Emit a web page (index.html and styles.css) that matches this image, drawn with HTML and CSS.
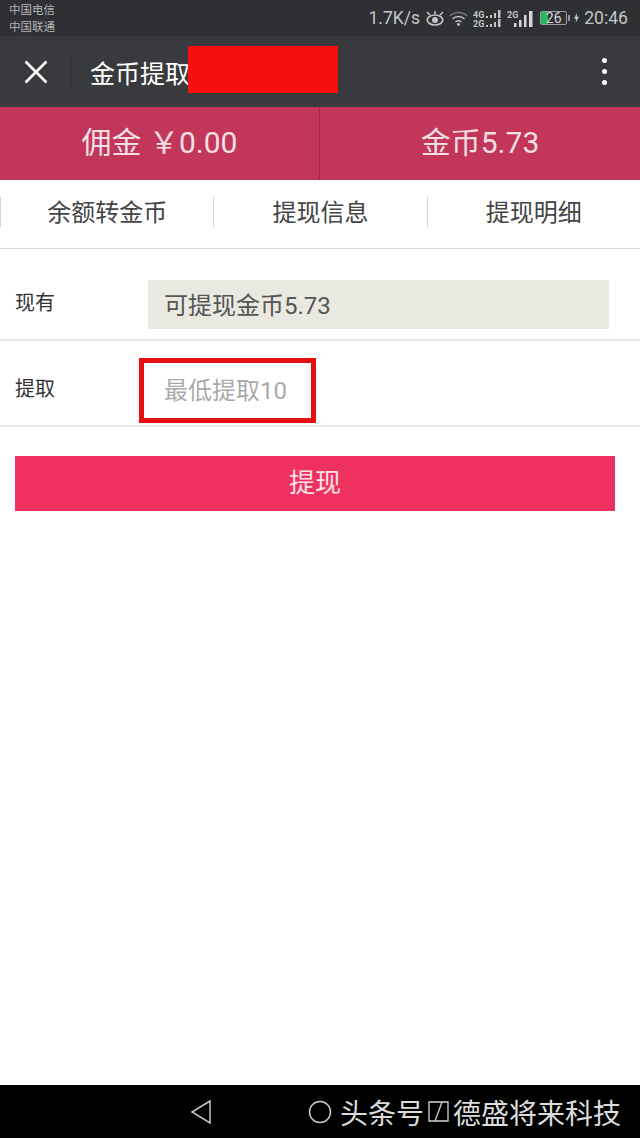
FILE: index.html
```html
<!DOCTYPE html>
<html lang="zh-CN">
  <head>
    <meta charset="UTF-8" />
    <meta name="viewport" content="width=device-width, initial-scale=1.0" />
    <title>金币提取</title>
    <link rel="stylesheet" href="styles.css">
  </head>
  <body>
    <div class="status-bar">
      <div class="carriers">
        <div>中国电信</div>
        <div>中国联通</div>
      </div>
      <div class="status-right">
        <span class="speed">1.7K/s</span>
        <svg class="icon-eye" width="18" height="15" viewBox="0 0 18 15">
          <path d="M1 1l3 3M17 1l-3 3M9 0v3" stroke="#c4c5c6" stroke-width="1.5" fill="none"/>
          <ellipse cx="9" cy="9" rx="7.800" ry="5" stroke="#c4c5c6" stroke-width="1.700" fill="none"/>
          <circle cx="9" cy="9" r="3" fill="#c4c5c6"/>
        </svg>
        <svg class="icon-wifi" width="19" height="16" viewBox="0 0 19 16">
          <path d="M1 6a12 12 0 0 1 17 0" stroke="#77787a" stroke-width="1.400" fill="none"/>
          <path d="M3.500 9a8.500 8.500 0 0 1 12 0M6.500 12a4.500 4.500 0 0 1 6 0" stroke="#c4c5c6" stroke-width="1.500" fill="none"/>
          <circle cx="9.500" cy="14.500" r="1.400" fill="#c4c5c6"/>
        </svg>
        <svg class="icon-signal-double" width="28" height="17" viewBox="0 0 28 17">
          <text x="0" y="7.500" class="net-label">4G</text>
          <text x="0" y="16.500" class="net-label">2G</text>
          <path d="M13 6h2v2h-2zM17 5h2v3h-2zM21 3h2v5h-2zM25 0h2.500v8h-2.500zM13 15h2v2h-2zM17 14h2v3h-2zM21 12h2v5h-2zM25 9h2.500v8h-2.500z" fill="#c4c5c6"/>
        </svg>
        <svg class="icon-signal" width="26" height="17" viewBox="0 0 26 17">
          <text x="0" y="7.500" class="net-label">2G</text>
          <path d="M7 13h2.500v4h-2.500zM12 10h2.500v7h-2.500zM17 5h2.500v12h-2.500zM22 1h3.500v16h-3.500z" fill="#d5d6d7"/>
        </svg>
        <div class="battery">
          <div class="battery-fill"></div>
          <span class="battery-num">26</span>
        </div>
        <div class="battery-cap"></div>
        <svg class="icon-bolt" width="5" height="12" viewBox="0 0 6 12">
          <path d="M3.500 0L0 7h2.500L2 12l4-7.500H3.500z" fill="#c4c5c6"/>
        </svg>
        <span class="clock">20:46</span>
      </div>
    </div>

    <div class="nav-bar">
      <svg class="icon-close" width="24" height="24" viewBox="0 0 24 24">
        <path d="M1.500 1.500L22.500 22.500M22.500 1.500L1.500 22.500" stroke="#fff" stroke-width="2.600" fill="none"/>
      </svg>
      <div class="nav-divider"></div>
      <div class="nav-title">金币提取</div>
      <div class="redaction"></div>
      <div class="more-dots">
        <span></span>
        <span></span>
        <span></span>
      </div>
    </div>

    <div class="balance-bar">
      <div class="balance-item">佣金 ￥0.00</div>
      <div class="balance-item">金币5.73</div>
    </div>

    <div class="tabs">
      <div class="tab">余额转金币</div>
      <div class="tab">提现信息</div>
      <div class="tab">提现明细</div>
    </div>

    <div class="form-row row-current">
      <div class="row-label">现有</div>
      <div class="current-value">可提现金币5.73</div>
    </div>

    <div class="form-row row-amount">
      <div class="row-label">提取</div>
      <div class="amount-input">最低提取10</div>
    </div>

    <div class="submit">提现</div>

    <div class="spacer"></div>

    <div class="bottom-bar">
      <svg class="icon-back" width="22" height="26" viewBox="0 0 22 26">
        <path d="M20 2L2 13L20 24Z" stroke="#c9c9c9" stroke-width="1.500" fill="none"/>
      </svg>
      <div class="watermark">
        <svg class="icon-home" width="24" height="24" viewBox="0 0 24 24">
          <circle cx="12" cy="12" r="10.500" stroke="#c9c9c9" stroke-width="1.500" fill="none"/>
        </svg>
        <span class="wm-text">头条号</span>
        <svg class="icon-slash" width="21" height="21" viewBox="0 0 21 21">
          <path d="M1 1h19v19h-19zM14 1L7 20" stroke="#d5d5d5" stroke-width="1.300" fill="none"/>
        </svg>
        <span class="wm-text">德盛将来科技</span>
      </div>
    </div>
  </body>
</html>
```

FILE: styles.css
```css
html,
body {
  margin: 0;
  padding: 0;
}
body {
  width: 640px;
  height: 1138px;
  display: flex;
  flex-direction: column;
  background-color: #fff;
  font-family: "Roboto", "Noto Sans CJK SC", sans-serif;
  color: #333;
  overflow: hidden;
}

/* status bar */
.status-bar {
  height: 36px;
  flex: none;
  display: flex;
  justify-content: space-between;
  align-items: center;
  background-color: #2f3033;
  color: #c4c5c6;
}
.carriers {
  margin-left: 9px;
  padding-top: 2px;
  font-size: 11.5px;
  line-height: 17px;
  color: #b4b5b6;
}
.status-right {
  display: flex;
  align-items: center;
  margin-right: 12px;
}
.speed {
  font-size: 17.6px;
  margin-right: 6px;
}
.icon-eye {
  margin-right: 5px;
}
.icon-wifi {
  margin-right: 5px;
}
.icon-signal-double {
  margin-right: 6px;
}
.icon-signal {
  margin-right: 7px;
}
.net-label {
  font-family: "Roboto", sans-serif;
  font-size: 9px;
  font-weight: 700;
  fill: #c4c5c6;
}
.battery {
  position: relative;
  width: 25px;
  height: 12px;
  border: 1px solid #9a9b9c;
  border-radius: 2px;
  display: flex;
  align-items: center;
  justify-content: center;
}
.battery-fill {
  position: absolute;
  left: 0;
  top: 0;
  bottom: 0;
  width: 7px;
  background-color: #27b85a;
}
.battery-num {
  position: relative;
  font-size: 14px;
  line-height: 12px;
  color: #d5d6d7;
}
.battery-cap {
  width: 2px;
  height: 6px;
  margin-left: 1px;
  margin-right: 4px;
  background-color: #9a9b9c;
}
.icon-bolt {
  margin-right: 5px;
}
.clock {
  font-size: 17.6px;
}

/* nav bar */
.nav-bar {
  height: 71px;
  flex: none;
  position: relative;
  display: flex;
  align-items: center;
  background-color: #393a3e;
}
.icon-close {
  margin-left: 24px;
}
.nav-divider {
  width: 1px;
  height: 36px;
  margin-left: 23px;
  background-color: #333437;
}
.nav-title {
  margin-left: 18px;
  font-size: 25px;
  color: #fff;
}
.redaction {
  position: absolute;
  left: 188px;
  top: 10px;
  width: 150px;
  height: 47px;
  background-color: #f50f0f;
}
.more-dots {
  margin-left: auto;
  margin-right: 33px;
  display: flex;
  flex-direction: column;
  gap: 6px;
}
.more-dots span {
  width: 5px;
  height: 5px;
  border-radius: 50%;
  background-color: #fff;
}

/* balance */
.balance-bar {
  height: 73px;
  flex: none;
  display: flex;
  background-color: #c2365a;
}
.balance-item {
  flex: 1;
  display: flex;
  align-items: center;
  justify-content: center;
  padding-bottom: 7px;
  font-size: 30px;
  color: #f3dfe4;
}
.balance-item:first-child {
  flex: none;
  width: 319px;
  border-right: 1px solid #a52a48;
}

/* tabs */
.tabs {
  height: 64px;
  padding-bottom: 4px;
  flex: none;
  display: flex;
  align-items: center;
  border-bottom: 1px solid #d9d9d9;
}
.tab {
  flex: 1;
  height: 30px;
  box-sizing: border-box;
  padding-bottom: 3px;
  display: flex;
  align-items: center;
  justify-content: center;
  font-size: 24px;
  color: #444;
  border-left: 1px solid #d5d5d5;
}

/* form */
.form-row {
  flex: none;
  box-sizing: border-box;
  display: flex;
  align-items: flex-start;
  border-bottom: 2px solid #e6e6e6;
}
.row-current {
  height: 92px;
  padding-top: 31px;
}
.row-amount {
  height: 86px;
  padding-top: 17px;
}
.row-label {
  width: 124px;
  margin-left: 15px;
  font-size: 20px;
  line-height: 30px;
  color: #333;
}
.row-current .row-label {
  margin-top: 8px;
}
.row-amount .row-label {
  margin-top: 16px;
}
.current-value {
  width: 445px;
  height: 47px;
  margin-left: 9px;
  padding-left: 16px;
  padding-bottom: 2px;
  display: flex;
  align-items: center;
  background-color: #e9e9e2;
  font-size: 24px;
  color: #555;
}
.amount-input {
  width: 147px;
  height: 51px;
  border: 5px solid #e60f12;
  padding-left: 20px;
  padding-bottom: 4px;
  display: flex;
  align-items: center;
  font-size: 24px;
  color: #aaa;
}
.submit {
  flex: none;
  height: 49px;
  padding-bottom: 6px;
  margin: 29px 25px 0 15px;
  display: flex;
  align-items: center;
  justify-content: center;
  background-color: #ef315f;
  color: #fbe3e9;
  font-size: 26px;
}
.spacer {
  flex: 1;
}

/* bottom navigation */
.bottom-bar {
  height: 53px;
  flex: none;
  display: flex;
  align-items: center;
  background-color: #000;
}
.icon-back {
  margin-left: 190px;
}
.watermark {
  margin-left: 96px;
  display: flex;
  align-items: center;
  gap: 4px;
}
.icon-home {
  margin-right: 4px;
}
.wm-text {
  font-size: 28px;
  color: #dcdcdc;
}
```
